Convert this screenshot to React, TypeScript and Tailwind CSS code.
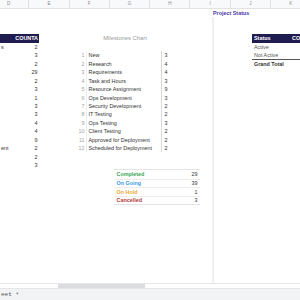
import React from 'react';

const row = 'h-[8.45px] flex items-center whitespace-nowrap';

const counts: { label: string; value: number }[] = [
  { label: 's', value: 2 },
  { label: '', value: 3 },
  { label: '', value: 2 },
  { label: '', value: 29 },
  { label: '', value: 2 },
  { label: '', value: 3 },
  { label: '', value: 1 },
  { label: '', value: 3 },
  { label: '', value: 3 },
  { label: '', value: 4 },
  { label: '', value: 4 },
  { label: '', value: 9 },
  { label: 'ent', value: 2 },
  { label: '', value: 2 },
  { label: '', value: 3 },
];

const milestones: [string, number][] = [
  ['New', 3],
  ['Research', 4],
  ['Requirements', 4],
  ['Task and Hours', 3],
  ['Resource Assignment', 9],
  ['Ops Development', 3],
  ['Security Development', 2],
  ['IT Testing', 2],
  ['Ops Testing', 3],
  ['Client Testing', 2],
  ['Approved for Deployment', 2],
  ['Scheduled for Deployment', 2],
];

const statuses = [
  { label: 'Completed', value: 29, color: 'text-[#3aa757]' },
  { label: 'On Going', value: 39, color: 'text-[#3d9be0]' },
  { label: 'On Hold', value: 1, color: 'text-[#f0a830]' },
  { label: 'Cancelled', value: 3, color: 'text-[#b73a3a]' },
];

const columns = ['D', 'E', 'F', 'G', 'H', 'I', 'J', 'K'];

function Blank({ n }: { n: number }) {
  return (
    <>
      {Array.from({ length: n }).map((_, i) => (
        <div key={i} className={row} />
      ))}
    </>
  );
}

export default function App() {
  return (
    <div className="w-[300px] h-[300px] overflow-hidden bg-white flex flex-col font-['Liberation_Sans',Arial,sans-serif] text-[5.4px] text-[#333]">
      {/* column headers */}
      <div className="h-[9px] shrink-0 flex -ml-[11px] bg-[#f8f9fa] border-b border-[#e2e2e2]">
        {columns.map((c) => (
          <div
            key={c}
            className="w-[40.3px] shrink-0 border-r border-[#e2e2e2] flex items-center justify-center text-[4.5px] text-[#888]"
          >
            {c}
          </div>
        ))}
      </div>

      {/* sheet body */}
      <div className="h-[274px] shrink-0 flex items-stretch">
        {/* pivot counts */}
        <div className="w-[39px] shrink-0 flex flex-col">
          <Blank n={3} />
          <div className={`${row} justify-end bg-[#1f1c4f] text-white font-bold pr-[1px]`}>COUNTA</div>
          {counts.map((c, i) => (
            <div key={i} className={`${row} justify-between pr-[1.5px]`}>
              <span className="pl-[1px]">{c.label}</span>
              <span>{c.value}</span>
            </div>
          ))}
        </div>

        {/* milestones */}
        <div className="w-[173px] shrink-0 flex flex-col">
          <Blank n={3} />
          <div className={`${row} justify-center pr-[1px] text-[5.8px] text-[#9a9a9a]`}>Milestones Chart</div>
          <Blank n={1} />
          {milestones.map(([name, value], i) => (
            <div key={name} className={row}>
              <div className="w-[48px] h-full flex items-center justify-end pr-[1.5px] text-[#a5a5a5] border-r border-[#ececec]">
                {i + 1}
              </div>
              <div className="w-[75px] h-full flex items-center pl-[1.5px] border-r border-[#d8d8d8]">{name}</div>
              <div className="pl-[2.5px]">{value}</div>
            </div>
          ))}
          <Blank n={2} />
          <div className="ml-[75px] w-[86px] border-y border-[#e4e4e4]">
            {statuses.map((s, i) => (
              <div
                key={s.label}
                className={`${row} justify-between px-[2.5px] ${i > 0 ? 'border-t border-[#ececec]' : ''}`}
              >
                <span className={`font-bold ${s.color}`}>{s.label}</span>
                <span>{s.value}</span>
              </div>
            ))}
          </div>
        </div>

        {/* project status */}
        <div className="flex-1 flex flex-col">
          <div className={`${row} pl-[1px] font-bold text-[#4a36a8]`}>Project Status</div>
          <div className="flex-1 flex">
            <div className="w-[2px] bg-[#efefef]" />
            <div className="flex-1 flex flex-col pl-[38px]">
              <Blank n={2} />
              <div className={`${row} bg-[#1f1c4f] text-white font-bold`}>
                <span className="w-[40px] pl-[2px]">Status</span>
                <span>COUNTA</span>
              </div>
              <div className={`${row} pl-[2px] text-[#555]`}>Active</div>
              <div className={`${row} pl-[2px] text-[#555] border-b border-[#555]`}>Not Active</div>
              <div className={`${row} pl-[2px] font-bold`}>Grand Total</div>
            </div>
          </div>
        </div>
      </div>

      {/* horizontal scrollbar */}
      <div className="h-[5px] shrink-0 border-t border-[#e6e6e6] flex items-center">
        <div className="ml-[58px] w-[87px] h-[3.5px] bg-[#dadce0]" />
      </div>

      {/* sheet tabs */}
      <div className="flex-1 bg-[#f1f3f4] border-t border-[#e6e6e6] flex items-center gap-[4px] pl-[1px] font-['Liberation_Mono',monospace] text-[6px] text-[#555]">
        <span>eet</span>
        <span className="text-[5px]">▾</span>
      </div>
    </div>
  );
}
